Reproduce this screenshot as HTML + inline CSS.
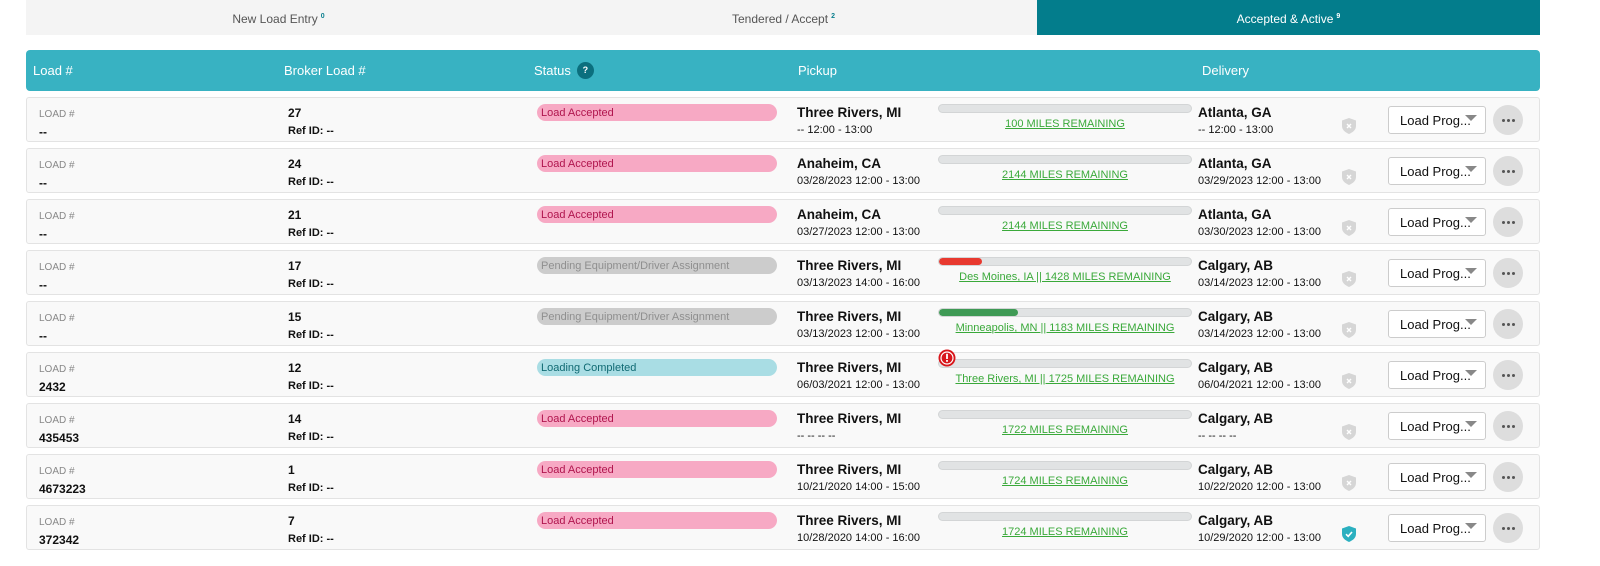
<!DOCTYPE html>
<html><head><meta charset="utf-8"><style>
*{box-sizing:border-box;margin:0;padding:0}
body{width:1600px;height:566px;background:#fff;font-family:"Liberation Sans",sans-serif;position:relative;overflow:hidden;color:#111}
.tabs{position:absolute;left:26px;top:0;width:1514px;height:35px;background:#f4f4f4;font-size:12px;color:#555}
.tab{position:absolute;top:0;height:35px;line-height:34px;text-align:center}
.tab sup{font-size:7px;color:#0a7f8e;font-weight:bold;margin-left:3px}
.tab.act{background:#037d8c;color:#fff}
.tab.act sup{color:#fff}
.hdr{position:absolute;left:26px;top:50px;width:1514px;height:41px;background:#38b2c2;border-radius:4px;color:#fff;font-size:13px}
.hdr>span{position:absolute;top:0;height:41px;display:flex;align-items:center}
.q{display:inline-block;width:17px;height:17px;border-radius:50%;background:#0b6f7e;color:#fff;font-size:9px;text-align:center;line-height:17px;font-weight:bold;margin-left:6px}
.row{position:absolute;left:26px;width:1514px;height:45px;background:#f9f9f9;border:1px solid #e3e3e3;border-radius:3px}
.row div{position:absolute;white-space:nowrap}
.lbl{left:12px;top:11px;font-size:10px;color:#888}
.lv{left:12px;top:27px;font-size:12px;font-weight:bold}
.bn{left:261px;top:8px;font-size:12px;font-weight:bold}
.ref{left:261px;top:27px;font-size:11px;font-weight:bold}
.row .pill{left:510px;top:6px;width:240px;height:17px;border-radius:9px;font-size:11px;padding-left:4px;display:flex;align-items:center}
.pa{background:#f7a9c4;color:#b0154e}
.pp{background:#ccc;color:#8f8f8f}
.pl{background:#a9dde4;color:#106a73}
.city{top:7px;font-size:13.5px;font-weight:bold}
.dt{top:26px;font-size:11px}
.pu{left:770px}.de{left:1171px}
.bar{left:911px;top:6px;width:254px;height:9px;border-radius:5px;background:#e1e3e4;border:1px solid #d3d5d6;overflow:hidden}
.bar i{display:block;height:100%;border-radius:5px}
.mi{left:911px;width:254px;top:20px;text-align:center;font-size:11px;color:#3aa93a;text-decoration:underline}
.sh{left:1315px;top:20px}
.dd{left:1361px;top:8px;width:98px;height:28px;background:#fff;border:1px solid #ccc;border-radius:3px;font-size:13px;line-height:28px;padding-left:11px}
.dd b{position:absolute;right:8px;top:8px;width:0;height:0;border-left:6px solid transparent;border-right:6px solid transparent;border-top:6px solid #888}
.row .dots{left:1466px;top:7px;width:30px;height:30px;border-radius:50%;background:#ddd;display:flex;align-items:center;justify-content:center;gap:2px}
.dots i{display:block;width:3px;height:3px;border-radius:50%;background:#555}
</style></head><body>
<div class="tabs">
<div class="tab" style="left:0;width:505px">New Load Entry<sup>0</sup></div>
<div class="tab" style="left:505px;width:505px">Tendered / Accept<sup>2</sup></div>
<div class="tab act" style="left:1011px;width:503px">Accepted &amp; Active<sup>9</sup></div>
</div>
<div class="hdr"><span style="left:7px">Load #</span><span style="left:258px">Broker Load #</span><span style="left:508px">Status<span class="q">?</span></span><span style="left:772px">Pickup</span><span style="left:1176px">Delivery</span></div>

<div class="row" style="top:97px"><div class="lbl">LOAD #</div><div class="lv">--</div><div class="bn">27</div><div class="ref">Ref ID: --</div><div class="pill pa">Load Accepted</div><div class="city pu">Three Rivers, MI</div><div class="dt pu">-- 12:00 - 13:00</div><div class="bar"></div><div class="mi">100 MILES REMAINING</div><div class="city de">Atlanta, GA</div><div class="dt de">-- 12:00 - 13:00</div><div class="sh"><svg width="14" height="16" viewBox="0 0 14 16"><path d="M7 0L14 2.5V8C14 12 10.5 14.5 7 16C3.5 14.5 0 12 0 8V2.5Z" fill="#d6d6d6"/><path d="M5 6L9 10M9 6L5 10" stroke="#fff" stroke-width="1.4"/></svg></div><div class="dd">Load Prog...<b></b></div><div class="dots"><i></i><i></i><i></i></div></div>

<div class="row" style="top:148px"><div class="lbl">LOAD #</div><div class="lv">--</div><div class="bn">24</div><div class="ref">Ref ID: --</div><div class="pill pa">Load Accepted</div><div class="city pu">Anaheim, CA</div><div class="dt pu">03/28/2023 12:00 - 13:00</div><div class="bar"></div><div class="mi">2144 MILES REMAINING</div><div class="city de">Atlanta, GA</div><div class="dt de">03/29/2023 12:00 - 13:00</div><div class="sh"><svg width="14" height="16" viewBox="0 0 14 16"><path d="M7 0L14 2.5V8C14 12 10.5 14.5 7 16C3.5 14.5 0 12 0 8V2.5Z" fill="#d6d6d6"/><path d="M5 6L9 10M9 6L5 10" stroke="#fff" stroke-width="1.4"/></svg></div><div class="dd">Load Prog...<b></b></div><div class="dots"><i></i><i></i><i></i></div></div>

<div class="row" style="top:199px"><div class="lbl">LOAD #</div><div class="lv">--</div><div class="bn">21</div><div class="ref">Ref ID: --</div><div class="pill pa">Load Accepted</div><div class="city pu">Anaheim, CA</div><div class="dt pu">03/27/2023 12:00 - 13:00</div><div class="bar"></div><div class="mi">2144 MILES REMAINING</div><div class="city de">Atlanta, GA</div><div class="dt de">03/30/2023 12:00 - 13:00</div><div class="sh"><svg width="14" height="16" viewBox="0 0 14 16"><path d="M7 0L14 2.5V8C14 12 10.5 14.5 7 16C3.5 14.5 0 12 0 8V2.5Z" fill="#d6d6d6"/><path d="M5 6L9 10M9 6L5 10" stroke="#fff" stroke-width="1.4"/></svg></div><div class="dd">Load Prog...<b></b></div><div class="dots"><i></i><i></i><i></i></div></div>

<div class="row" style="top:250px"><div class="lbl">LOAD #</div><div class="lv">--</div><div class="bn">17</div><div class="ref">Ref ID: --</div><div class="pill pp">Pending Equipment/Driver Assignment</div><div class="city pu">Three Rivers, MI</div><div class="dt pu">03/13/2023 14:00 - 16:00</div><div class="bar"><i style="width:43px;background:#e8392f"></i></div><div class="mi">Des Moines, IA || 1428 MILES REMAINING</div><div class="city de">Calgary, AB</div><div class="dt de">03/14/2023 12:00 - 13:00</div><div class="sh"><svg width="14" height="16" viewBox="0 0 14 16"><path d="M7 0L14 2.5V8C14 12 10.5 14.5 7 16C3.5 14.5 0 12 0 8V2.5Z" fill="#d6d6d6"/><path d="M5 6L9 10M9 6L5 10" stroke="#fff" stroke-width="1.4"/></svg></div><div class="dd">Load Prog...<b></b></div><div class="dots"><i></i><i></i><i></i></div></div>

<div class="row" style="top:301px"><div class="lbl">LOAD #</div><div class="lv">--</div><div class="bn">15</div><div class="ref">Ref ID: --</div><div class="pill pp">Pending Equipment/Driver Assignment</div><div class="city pu">Three Rivers, MI</div><div class="dt pu">03/13/2023 12:00 - 13:00</div><div class="bar"><i style="width:79px;background:#3f9a55"></i></div><div class="mi">Minneapolis, MN || 1183 MILES REMAINING</div><div class="city de">Calgary, AB</div><div class="dt de">03/14/2023 12:00 - 13:00</div><div class="sh"><svg width="14" height="16" viewBox="0 0 14 16"><path d="M7 0L14 2.5V8C14 12 10.5 14.5 7 16C3.5 14.5 0 12 0 8V2.5Z" fill="#d6d6d6"/><path d="M5 6L9 10M9 6L5 10" stroke="#fff" stroke-width="1.4"/></svg></div><div class="dd">Load Prog...<b></b></div><div class="dots"><i></i><i></i><i></i></div></div>

<div class="row" style="top:352px"><div class="lbl">LOAD #</div><div class="lv">2432</div><div class="bn">12</div><div class="ref">Ref ID: --</div><div class="pill pl">Loading Completed</div><div class="city pu">Three Rivers, MI</div><div class="dt pu">06/03/2021 12:00 - 13:00</div><div class="bar"></div><div style="left:911px;top:-4px"><svg width="18" height="18" viewBox="0 0 18 18"><circle cx="9" cy="9" r="8.5" fill="#d8161b"/><circle cx="9" cy="9" r="6" fill="none" stroke="#fff" stroke-width="1.2"/><rect x="8.1" y="4.8" width="1.8" height="5.2" fill="#fff"/><rect x="8.1" y="11" width="1.8" height="1.8" fill="#fff"/></svg></div><div class="mi">Three Rivers, MI || 1725 MILES REMAINING</div><div class="city de">Calgary, AB</div><div class="dt de">06/04/2021 12:00 - 13:00</div><div class="sh"><svg width="14" height="16" viewBox="0 0 14 16"><path d="M7 0L14 2.5V8C14 12 10.5 14.5 7 16C3.5 14.5 0 12 0 8V2.5Z" fill="#d6d6d6"/><path d="M5 6L9 10M9 6L5 10" stroke="#fff" stroke-width="1.4"/></svg></div><div class="dd">Load Prog...<b></b></div><div class="dots"><i></i><i></i><i></i></div></div>

<div class="row" style="top:403px"><div class="lbl">LOAD #</div><div class="lv">435453</div><div class="bn">14</div><div class="ref">Ref ID: --</div><div class="pill pa">Load Accepted</div><div class="city pu">Three Rivers, MI</div><div class="dt pu">-- -- -- --</div><div class="bar"></div><div class="mi">1722 MILES REMAINING</div><div class="city de">Calgary, AB</div><div class="dt de">-- -- -- --</div><div class="sh"><svg width="14" height="16" viewBox="0 0 14 16"><path d="M7 0L14 2.5V8C14 12 10.5 14.5 7 16C3.5 14.5 0 12 0 8V2.5Z" fill="#d6d6d6"/><path d="M5 6L9 10M9 6L5 10" stroke="#fff" stroke-width="1.4"/></svg></div><div class="dd">Load Prog...<b></b></div><div class="dots"><i></i><i></i><i></i></div></div>

<div class="row" style="top:454px"><div class="lbl">LOAD #</div><div class="lv">4673223</div><div class="bn">1</div><div class="ref">Ref ID: --</div><div class="pill pa">Load Accepted</div><div class="city pu">Three Rivers, MI</div><div class="dt pu">10/21/2020 14:00 - 15:00</div><div class="bar"></div><div class="mi">1724 MILES REMAINING</div><div class="city de">Calgary, AB</div><div class="dt de">10/22/2020 12:00 - 13:00</div><div class="sh"><svg width="14" height="16" viewBox="0 0 14 16"><path d="M7 0L14 2.5V8C14 12 10.5 14.5 7 16C3.5 14.5 0 12 0 8V2.5Z" fill="#d6d6d6"/><path d="M5 6L9 10M9 6L5 10" stroke="#fff" stroke-width="1.4"/></svg></div><div class="dd">Load Prog...<b></b></div><div class="dots"><i></i><i></i><i></i></div></div>

<div class="row" style="top:505px"><div class="lbl">LOAD #</div><div class="lv">372342</div><div class="bn">7</div><div class="ref">Ref ID: --</div><div class="pill pa">Load Accepted</div><div class="city pu">Three Rivers, MI</div><div class="dt pu">10/28/2020 14:00 - 16:00</div><div class="bar"></div><div class="mi">1724 MILES REMAINING</div><div class="city de">Calgary, AB</div><div class="dt de">10/29/2020 12:00 - 13:00</div><div class="sh"><svg width="14" height="16" viewBox="0 0 14 16"><path d="M7 0L14 2.5V8C14 12 10.5 14.5 7 16C3.5 14.5 0 12 0 8V2.5Z" fill="#2bb0c0"/><path d="M4 8.2L6.2 10.3L10 6" stroke="#fff" stroke-width="1.6" fill="none"/></svg></div><div class="dd">Load Prog...<b></b></div><div class="dots"><i></i><i></i><i></i></div></div>
</body></html>
